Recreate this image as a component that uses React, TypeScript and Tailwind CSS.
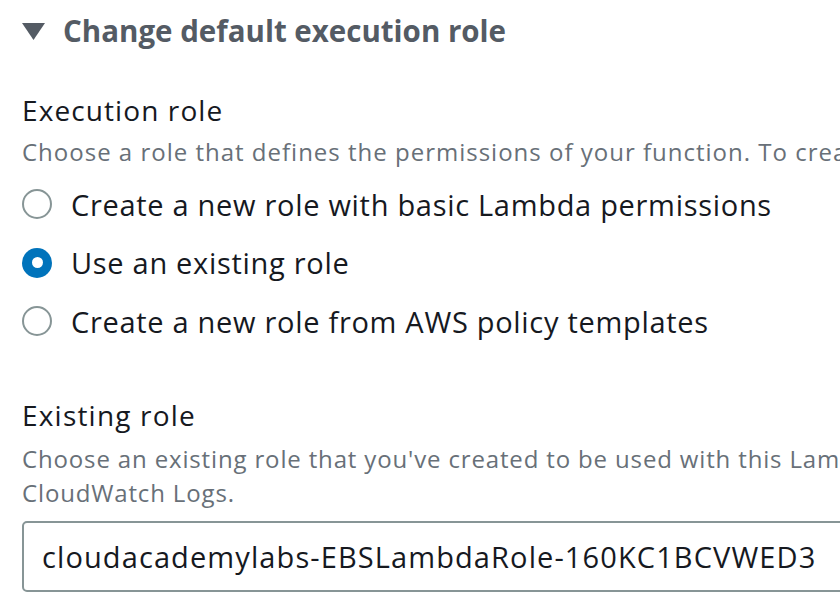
import React from "react";

const roles = [
  { label: "Create a new role with basic Lambda permissions", checked: false },
  { label: "Use an existing role", checked: true },
  { label: "Create a new role from AWS policy templates", checked: false },
];

// Radio circle, AWS style
const Radio = ({ checked }: { checked: boolean }) =>
  checked ? (
    <span className="flex h-[30px] w-[30px] shrink-0 items-center justify-center rounded-full bg-[#0073bb]">
      <span className="h-[11px] w-[11px] rounded-full bg-white" />
    </span>
  ) : (
    <span className="h-[30px] w-[30px] shrink-0 rounded-full border-2 border-[#879596] bg-white" />
  );

export default function App() {
  return (
    <div className="h-[608px] w-[840px] overflow-hidden bg-white pl-[22px] font-['Open_Sans',sans-serif] whitespace-nowrap">
      {/* Expandable section header */}
      <div className="flex items-center gap-[18px] pt-[10px] h-[52px]">
        <svg width="23" height="17" viewBox="0 0 23 17" className="shrink-0">
          <polygon points="0,0 23,0 11.5,17" fill="#545b64" />
        </svg>
        <h2 className="text-[29.5px] font-bold text-[#545b64] leading-none">Change default execution role</h2>
      </div>

      <div className="mt-[40px]">
        <p className="text-[28px] leading-[36px] tracking-[1.1px] text-[#16191f]">Execution role</p>
        <p className="mt-[7px] text-[24px] leading-[34px] tracking-[1px] text-[#687078]">
          Choose a role that defines the permissions of your function. To create a custom role, go to the IAM console.
        </p>
      </div>

      <div className="mt-[17px] flex flex-col gap-[22.5px]">
        {roles.map((r) => (
          <label key={r.label} className="flex items-center gap-[19px] h-[36px]">
            <Radio checked={r.checked} />
            <span className="text-[29px] tracking-[0.7px] text-[#16191f] leading-none">{r.label}</span>
          </label>
        ))}
      </div>

      <div className="mt-[58px]">
        <p className="text-[28px] leading-[36px] tracking-[1.2px] text-[#16191f]">Existing role</p>
        <div className="mt-[9px] text-[24px] leading-[34px] tracking-[0.85px] text-[#687078]">
          <p>Choose an existing role that you've created to be used with this Lambda function. The role must have permission to upload logs to Amazon</p>
          <p>CloudWatch Logs.</p>
        </div>
      </div>

      <div className="mt-[11px] flex h-[71px] w-[860px] items-center rounded-[5px] border-2 border-[#879596] pl-[18px]">
        <span className="text-[29px] tracking-[1.1px] text-[#16191f]">cloudacademylabs-EBSLambdaRole-160KC1BCVWED3</span>
      </div>
    </div>
  );
}
